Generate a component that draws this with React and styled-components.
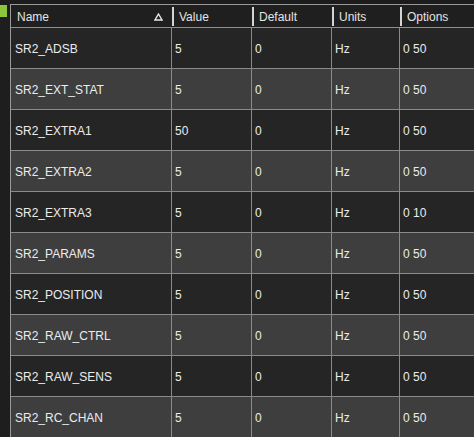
import React from "react";
import styled, { createGlobalStyle } from "styled-components";

const GlobalStyle = createGlobalStyle`
  html, body {
    margin: 0;
    padding: 0;
    background: #1c1c1c;
    overflow: hidden;
  }
  body {
    font-family: "Liberation Sans", Arial, sans-serif;
  }
`;

const Frame = styled.div`
  display: flex;
  width: 474px;
  height: 437px;
  overflow: hidden;
  background: #1c1c1c;
`;

const Side = styled.div`
  width: 10px;
  flex-shrink: 0;
  background: #1e1e1e;
`;

const GreenTab = styled.div`
  margin-top: 5px;
  width: 7px;
  height: 12px;
  background: #8cc43c;
`;

const Grid = styled.div`
  flex: 1;
  margin-top: 4px;
  border-top: 1px solid #9a9a9a;
  border-left: 1px solid #9a9a9a;
  display: flex;
  flex-direction: column;
`;

const COLS = "161px 80px 80px 68px 1fr";

const HeaderRow = styled.div`
  display: grid;
  grid-template-columns: ${COLS};
  height: 22px;
  flex-shrink: 0;
  background: #1f1f1f;
  border-bottom: 1px solid #8f8f8f;
`;

const HeaderCell = styled.div`
  display: flex;
  align-items: center;
  justify-content: space-between;
  margin: 2px 0 1px;
  padding: 1px 8px 0 ${(p) => (p.$first ? "6px" : "5px")};
  border-left: ${(p) => (p.$first ? "none" : "2px solid #d4d4d4")};
  font-size: 12px;
  color: #e4e4e4;
  white-space: nowrap;
`;

const SortArrow = styled.svg`
  width: 9px;
  height: 8px;
  margin-right: 1px;
`;

const Row = styled.div`
  display: grid;
  grid-template-columns: ${COLS};
  height: 40px;
  flex-shrink: 0;
  background: ${(p) => (p.$alt ? "#3e3e3e" : "#252525")};
  border-bottom: 1px solid #8a8a8a;
`;

const Cell = styled.div`
  display: flex;
  align-items: center;
  padding-left: ${(p) => (p.$first ? "4px" : "3px")};
  padding-top: 1px;
  border-right: ${(p) => (p.$last ? "none" : "1px solid #8a8a8a")};
  font-size: 12px;
  color: #ececec;
  white-space: nowrap;
`;

const rows = [
  ["SR2_ADSB", "5", "0", "Hz", "0 50"],
  ["SR2_EXT_STAT", "5", "0", "Hz", "0 50"],
  ["SR2_EXTRA1", "50", "0", "Hz", "0 50"],
  ["SR2_EXTRA2", "5", "0", "Hz", "0 50"],
  ["SR2_EXTRA3", "5", "0", "Hz", "0 10"],
  ["SR2_PARAMS", "5", "0", "Hz", "0 50"],
  ["SR2_POSITION", "5", "0", "Hz", "0 50"],
  ["SR2_RAW_CTRL", "5", "0", "Hz", "0 50"],
  ["SR2_RAW_SENS", "5", "0", "Hz", "0 50"],
  ["SR2_RC_CHAN", "5", "0", "Hz", "0 50"],
];

export default function App() {
  return (
    <>
      <GlobalStyle />
      <Frame>
        <Side>
          <GreenTab />
        </Side>
        <Grid>
          <HeaderRow>
            <HeaderCell $first>
              Name
              <SortArrow viewBox="0 0 9 8">
                <path d="M4.5 1 L8 7 L1 7 Z" fill="none" stroke="#e8e8e8" strokeWidth="1.4" />
              </SortArrow>
            </HeaderCell>
            <HeaderCell>Value</HeaderCell>
            <HeaderCell>Default</HeaderCell>
            <HeaderCell>Units</HeaderCell>
            <HeaderCell>Options</HeaderCell>
          </HeaderRow>
          {rows.map((r, i) => (
            <Row key={r[0]} $alt={i % 2 === 1}>
              {r.map((v, j) => (
                <Cell key={j} $first={j === 0} $last={j === r.length - 1}>
                  {v}
                </Cell>
              ))}
            </Row>
          ))}
        </Grid>
      </Frame>
    </>
  );
}
